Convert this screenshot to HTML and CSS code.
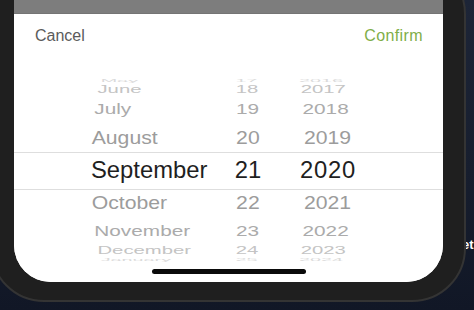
FILE: index.html
```html
<!DOCTYPE html>
<html lang="en">
<head>
<meta charset="utf-8">
<title>Date picker</title>
<link rel="stylesheet" href="styles.css">
</head>
<body>
<div class="scene">
  <span class="bg-label">et</span>
  <div class="phone">
    <div class="screen">
      <div class="dim"></div>
      <div class="sheet">
        <div class="header">
          <span class="btn cancel">Cancel</span>
          <span class="btn confirm">Confirm</span>
        </div>
        <div class="picker">
          <div class="wheel w-month">
            <span class="item s-4">May</span>
            <span class="item s-3">June</span>
            <span class="item s-2">July</span>
            <span class="item s-1">August</span>
            <span class="item s0">September</span>
            <span class="item s1">October</span>
            <span class="item s2">November</span>
            <span class="item s3">December</span>
            <span class="item s4">January</span>
          </div>
          <div class="wheel w-day">
            <span class="item s-4">17</span>
            <span class="item s-3">18</span>
            <span class="item s-2">19</span>
            <span class="item s-1">20</span>
            <span class="item s0">21</span>
            <span class="item s1">22</span>
            <span class="item s2">23</span>
            <span class="item s3">24</span>
            <span class="item s4">25</span>
          </div>
          <div class="wheel w-year">
            <span class="item s-4">2016</span>
            <span class="item s-3">2017</span>
            <span class="item s-2">2018</span>
            <span class="item s-1">2019</span>
            <span class="item s0">2020</span>
            <span class="item s1">2021</span>
            <span class="item s2">2022</span>
            <span class="item s3">2023</span>
            <span class="item s4">2024</span>
          </div>
        </div>
        <div class="home"></div>
      </div>
    </div>
  </div>
</div>
</body>
</html>
```
FILE: styles.css
```css
* { box-sizing: border-box; margin: 0; padding: 0; }

html, body {
  width: 474px;
  height: 310px;
  overflow: hidden;
}

body {
  background: linear-gradient(180deg, #1d2537 0%, #171e2e 55%, #111726 100%);
  font-family: "Liberation Sans", Arial, sans-serif;
}

.scene {
  display: grid;
  width: 474px;
  height: 310px;
  overflow: hidden;
}

.bg-label {
  grid-area: 1 / 1;
  justify-self: start;
  align-self: start;
  margin: 237px 0 0 462px;
  color: #ffffff;
  font-weight: 700;
  font-size: 13px;
  line-height: 16px;
}

.phone {
  grid-area: 1 / 1;
  position: relative;
  z-index: 1;
  align-self: start;
  justify-self: start;
  margin: -40px 0 0 -10px;
  width: 476px;
  height: 342px;
  background: #1f1f1f;
  border: 2px solid #343434;
  border-radius: 54px;
  padding: 0 21px 18px 22px;
  display: flex;
  flex-direction: column;
}

.screen {
  flex: 1;
  display: flex;
  flex-direction: column;
  background: #ffffff;
  border-radius: 0 0 37px 37px;
  overflow: hidden;
}

.dim {
  flex: none;
  height: 52px;
  background: #7d7d7d;
  border-bottom: 1px solid #747474;
}

.sheet {
  flex: 1;
  display: flex;
  flex-direction: column;
  background: #ffffff;
}

.header {
  display: flex;
  justify-content: space-between;
  padding: 12px 20px 0 21px;
  font-size: 16px;
  line-height: 20px;
}

.cancel { color: #5b5b5b; }
.confirm { color: #7fae48; letter-spacing: 0.4px; }

.picker {
  position: relative;
  margin-top: 31px;
  height: 186px;
  display: flex;
  padding-left: 77px;
}

.picker::before {
  content: "";
  position: absolute;
  left: 0;
  right: 0;
  top: 75px;
  height: 36px;
  border-top: 1px solid #dedede;
  border-bottom: 1px solid #dedede;
}

.wheel {
  display: grid;
  align-content: center;
}

/* --ox: horizontal distance from the wheel's left edge to the picker's centre line */
.w-month {
  --ox: 137.5px;
  width: 132px;
  text-align: left;
}

.w-day {
  --ox: 5.5px;
  width: 50px;
  text-align: center;
}

.w-year {
  --ox: -64.5px;
  width: 70px;
  margin-left: 20px;
  text-align: center;
}

.item {
  grid-area: 1 / 1;
  height: 36px;
  line-height: 36px;
  font-size: 21.3px;
  white-space: nowrap;
  transform-origin: var(--ox) 50%;
}

.s-4 { transform: translateY(-89.5px) scale(0.93, 0.2);   color: #dadada; }
.s-3 { transform: translateY(-80.2px) scale(0.953, 0.49); color: #c4c4c4; }
.s-2 { transform: translateY(-60.8px) scale(0.976, 0.73); color: #ababab; }
.s-1 { transform: translateY(-32.8px) scale(0.995, 0.9);  color: #9c9c9c; }
.s0  { font-size: 23.8px; color: #1f1f1f; }
.s1  { transform: translateY(32.8px) scale(0.995, 0.9);   color: #9c9c9c; }
.s2  { transform: translateY(60.8px) scale(0.976, 0.73);  color: #ababab; }
.s3  { transform: translateY(80.2px) scale(0.953, 0.49);  color: #c4c4c4; }
.s4  { transform: translateY(89.5px) scale(0.93, 0.2);    color: #dadada; }

.w-year .s0 { letter-spacing: 0.8px; }

.home {
  align-self: center;
  width: 154px;
  height: 5px;
  margin-top: 6px;
  border-radius: 3px;
  background: #0a0a0a;
}
```
